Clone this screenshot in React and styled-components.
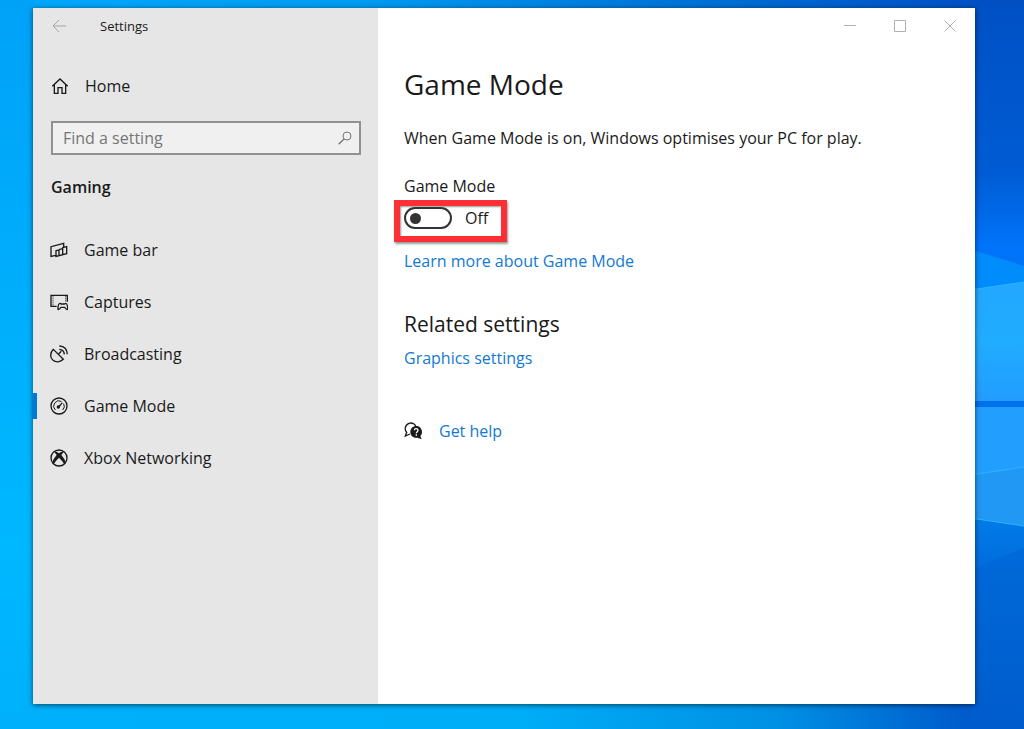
import React, { useState } from "react";
import styled, { createGlobalStyle } from "styled-components";

const GlobalStyle = createGlobalStyle`
*{
    box-sizing: border-box;
}
body{
    margin: 0;
    font-family: "Open Sans", "Noto Sans", sans-serif;
    font-size: 16px;
    line-height: 24px;
    color: #1a1a1a;
}
h1, h2, p{
    margin: 0;
    font-weight: 400;
}
button, input{
    font: inherit;
    color: inherit;
}
a{
    color: #1279d3;
    text-decoration: none;
    &:hover{
        color: #777;
    }
}
`

const Icon = ({ size = 18, box, children }) => (
    <svg width={size} height={size} viewBox={box} fill="none" stroke="currentColor" strokeWidth="4" aria-hidden="true">
        {children}
    </svg>
)

const HomeIcon = () => (
    <Icon box="0 0 54 54">
        <path d="M4 28L27 6L50 28M10 23V49H21V32H33V49H44V23" />
    </Icon>
)
const SearchIcon = () => (
    <Icon size={14} box="0 0 42 42">
        <circle cx="27" cy="15" r="12" strokeWidth="3" />
        <path d="M18 24L2 40" />
    </Icon>
)
const GameBarIcon = () => (
    <Icon box="59 34 54 54">
        <path d="M76 77L62 80V51L100 41V52M77 63L86 61V78L77 80ZM86 60L97 57V75L86 78M97 54L109 51V72L97 75Z" />
    </Icon>
)
const CapturesIcon = () => (
    <Icon box="59 190 54 54">
        <path d="M79 230H62V197H111V216" />
        <path d="M68 200V228M106 200V216" strokeWidth="3" strokeDasharray="3 3" />
        <path d="M83 239C83 229 86 221 89 221L93 223H102L106 221C109 221 112 229 112 239C109 241 106 237 103 233H92C89 237 86 241 83 239Z" />
    </Icon>
)
const BroadcastingIcon = () => (
    <Icon box="59 0 54 54">
        <path d="M69 13C58 24 59 39 68 46C77 53 90 52 99 43ZM84 28L93 19" />
        <path d="M87 13Q101 14 102 28M87 3Q110 4 111 28" />
    </Icon>
)
const GameModeIcon = () => (
    <Icon box="58 154 54 54">
        <circle cx="85" cy="181" r="24" />
        <path d="M74 193A16 16 0 0 1 92 167M99 174A16 16 0 0 1 96 193" strokeWidth="3" />
        <path d="M84 184L95 171" />
        <circle cx="83" cy="184" r="3" fill="currentColor" />
    </Icon>
)
const XboxIcon = () => (
    <Icon box="60 310 54 54">
        <circle cx="87" cy="337" r="24" />
        <path d="M72 318Q80 317 87 323Q94 317 102 318Q98 322 94 328Q104 339 108 352L103 356Q96 344 87 336Q78 344 71 356L66 352Q70 339 80 328Q76 322 72 318Z" fill="currentColor" stroke="none" />
    </Icon>
)
const HelpIcon = () => (
    <Icon box="42 364 54 54">
        <path d="M60 400L46 406L50 395C43 388 44 373 57 368C67 365 75 370 77 376" />
        <path d="M95 416L82 411C69 413 61 404 61 394C61 383 69 376 79 376C89 376 96 384 96 394C96 399 94 403 91 406Z" fill="currentColor" stroke="none" />
        <path d="M73 389C73 382 84 382 84 389C84 393 79 393 79 398M79 401V405" stroke="#fff" />
    </Icon>
)

const navItems = [
    { name: "Game bar", icon: GameBarIcon },
    { name: "Captures", icon: CapturesIcon },
    { name: "Broadcasting", icon: BroadcastingIcon },
    { name: "Game Mode", icon: GameModeIcon },
    { name: "Xbox Networking", icon: XboxIcon },
]

const Wallpaper = () => (
    <WallpaperSvg viewBox="0 0 1024 729" preserveAspectRatio="none" aria-hidden="true">
        <defs>
            <linearGradient id="base" x1="0" x2="1" y1="0" y2="0">
                <stop offset="0" stopColor="#00a8fb" />
                <stop offset="0.35" stopColor="#009cf2" />
                <stop offset="0.75" stopColor="#0068d0" />
                <stop offset="0.95" stopColor="#0050c4" />
            </linearGradient>
            <linearGradient id="low" x1="0" x2="1" y1="0" y2="0">
                <stop offset="0" stopColor="#00b0fa" />
                <stop offset="0.5" stopColor="#00aef8" />
                <stop offset="0.76" stopColor="#0090e4" />
                <stop offset="0.94" stopColor="#005ccc" />
            </linearGradient>
            <linearGradient id="left" x1="0" x2="0" y1="0" y2="1">
                <stop offset="0" stopColor="#00a2f8" />
                <stop offset="0.75" stopColor="#00b8ff" />
                <stop offset="1" stopColor="#00b0fa" />
            </linearGradient>
            <linearGradient id="right" x1="0" x2="0" y1="0" y2="1">
                <stop offset="0" stopColor="#0050c4" />
                <stop offset="0.24" stopColor="#005cd4" />
                <stop offset="0.34" stopColor="#0074fa" />
                <stop offset="0.7" stopColor="#006cdc" />
                <stop offset="1" stopColor="#005ccc" />
            </linearGradient>
            <linearGradient id="pane" x1="0" x2="0" y1="0" y2="1">
                <stop offset="0" stopColor="#22a8ff" />
                <stop offset="0.5" stopColor="#20acff" />
                <stop offset="1" stopColor="#229cff" />
            </linearGradient>
            <linearGradient id="beam" x1="0" x2="0" y1="0" y2="1">
                <stop offset="0" stopColor="#007ce8" />
                <stop offset="1" stopColor="#006cdc" />
            </linearGradient>
        </defs>
        <rect width="1024" height="360" fill="url(#base)" />
        <rect y="360" width="1024" height="369" fill="url(#low)" />
        <rect width="34" height="729" fill="url(#left)" />
        <rect x="970" width="54" height="729" fill="url(#right)" />
        <path d="M970 249L1024 266V300H970Z" fill="#008cfb" />
        <path d="M970 290L1024 282V402H970Z" fill="url(#pane)" />
        <path d="M970 401H1024V407H970Z" fill="#0070ec" />
        <path d="M970 407H1024V527L970 518Z" fill="#229eff" />
        <path d="M970 475L1024 467V526L970 518Z" fill="#2098f4" />
        <path d="M970 518L1024 526V548L970 570Z" fill="url(#beam)" />
        <path d="M970 290L1024 282M970 475L1024 467M970 518L1024 526" stroke="#2cb4ff" />
    </WallpaperSvg>
)

const App = () => {
    const [on, setOn] = useState(false);
    const [current, setCurrent] = useState("Game Mode");
    return (
        <Desktop>
            <GlobalStyle />
            <Wallpaper />
            <Window>
                <Sidebar>
                    <TitleBar>
                        <BackButton type="button" aria-label="Back">
                            <svg width="14" height="14" viewBox="0 0 14 14" fill="none" stroke="currentColor">
                                <path d="M14 7H1M7 1L1 7L7 13" />
                            </svg>
                        </BackButton>
                        <span>Settings</span>
                    </TitleBar>
                    <HomeButton type="button">
                        <HomeIcon />
                        Home
                    </HomeButton>
                    <SearchBox>
                        <input type="text" placeholder="Find a setting" aria-label="Find a setting" />
                        <SearchIcon />
                    </SearchBox>
                    <Category>Gaming</Category>
                    <nav>
                        {navItems.map(({ name, icon: ItemIcon }) => (
                            <NavButton key={name} type="button" $active={name === current} onClick={() => setCurrent(name)}>
                                <ItemIcon />
                                {name}
                            </NavButton>
                        ))}
                    </nav>
                </Sidebar>
                <Main>
                    <Caption>
                        <button type="button" aria-label="Minimise">
                            <svg width="12" height="12" fill="none" stroke="currentColor"><path d="M0 5.500H12" /></svg>
                        </button>
                        <button type="button" aria-label="Maximise">
                            <svg width="12" height="12" fill="none" stroke="currentColor"><path d="M.5 .5H11.500V11.500H.5Z" /></svg>
                        </button>
                        <button type="button" aria-label="Close">
                            <svg width="12" height="12" fill="none" stroke="currentColor"><path d="M.5 .5L11.500 11.500M11.500 .5L.5 11.500" /></svg>
                        </button>
                    </Caption>
                    <Content>
                        <h1>Game Mode</h1>
                        <p>When Game Mode is on, Windows optimises your PC for play.</p>
                        <label htmlFor="game-mode">Game Mode</label>
                        <Highlight>
                            <Toggle id="game-mode" type="checkbox" role="switch" checked={on} onChange={(e) => setOn(e.target.checked)} />
                            <span>{on ? "On" : "Off"}</span>
                        </Highlight>
                        <a href="#learn-more">Learn more about Game Mode</a>
                        <h2>Related settings</h2>
                        <a href="#graphics">Graphics settings</a>
                        <Help>
                            <HelpIcon />
                            <a href="#help">Get help</a>
                        </Help>
                    </Content>
                </Main>
            </Window>
        </Desktop>
    )
}

const Desktop = styled.div`
position: relative;
display: flex;
min-height: 100vh;
padding: 8px 49px 25px 33px;
background: #00a8fb;
`
const WallpaperSvg = styled.svg`
position: absolute;
inset: 0;
width: 100%;
height: 100%;
`
const Window = styled.div`
position: relative;
display: flex;
flex: 1;
background: #fff;
box-shadow: 0 1px 5px rgba(0, 0, 0, 0.6);
`
const Sidebar = styled.aside`
flex: 0 0 345px;
background: #e6e6e6;
button{
    border: none;
    background: transparent;
}
`
const TitleBar = styled.div`
display: flex;
align-items: center;
height: 36px;
font-size: 13px;
`
const BackButton = styled.button`
display: flex;
width: 67px;
padding: 0 0 0 19px;
color: #a6a6a6;
`
const HomeButton = styled.button`
display: flex;
align-items: center;
gap: 16px;
width: 100%;
height: 52px;
margin-top: 16px;
padding: 0 18px;
`
const SearchBox = styled.div`
display: flex;
align-items: center;
height: 34px;
margin: 9px 17px 0 18px;
padding: 0 7px 0 10px;
border: 2px solid #919191;
background: #f0f0f0;
color: #767676;
input{
    flex: 1;
    min-width: 0;
    padding: 0;
    border: none;
    outline: none;
    background: transparent;
    &::placeholder{
        color: #767676;
        opacity: 1;
    }
}
`
const Category = styled.h2`
margin: 20px 18px 25px;
font-size: 16px;
&&{
    font-weight: 600;
}
`
const NavButton = styled.button`
display: flex;
align-items: center;
width: 100%;
height: 52px;
padding: 0;
&::before{
    content: "";
    width: 4px;
    height: 26px;
    margin-right: 13px;
    background: ${(props) => (props.$active ? "#0078d7" : "transparent")};
}
svg{
    margin-right: 16px;
}
`
const Main = styled.main`
flex: 1;
min-width: 0;
`
const Caption = styled.div`
display: flex;
justify-content: flex-end;
height: 36px;
button{
    display: flex;
    align-items: center;
    justify-content: center;
    width: 50px;
    padding: 0;
    border: none;
    background: transparent;
    color: #b0b0b0;
}
`
const Content = styled.div`
display: flex;
flex-direction: column;
align-items: flex-start;
padding: 20px 26px;
h1{
    margin-bottom: 22px;
    font-size: 28px;
    line-height: 40px;
}
p{
    margin-bottom: 24px;
}
h2{
    margin: 37px 0 8px;
    font-size: 21px;
    line-height: 28px;
}
`
const Highlight = styled.div`
display: flex;
align-items: center;
gap: 13px;
height: 42px;
margin: 2px 0 7px -10px;
padding: 0 13px 6px 4px;
border: 6px solid #fb3035;
box-shadow: 1px 2px 2px rgba(0, 0, 0, 0.4), inset 1px 1px 2px rgba(0, 0, 0, 0.4);
`
const Toggle = styled.input`
display: flex;
align-items: center;
appearance: none;
width: 48px;
height: 22px;
margin: 0;
padding: 0 4px;
border: 2px solid #333;
border-radius: 11px;
&::before{
    content: "";
    width: 11px;
    height: 11px;
    border-radius: 50%;
    background: #333;
}
&:checked{
    justify-content: flex-end;
    border-color: #0078d7;
    background: #0078d7;
    &::before{
        background: #fff;
    }
}
`
const Help = styled.div`
display: flex;
align-items: center;
gap: 17px;
margin-top: 49px;
`
export default App;
